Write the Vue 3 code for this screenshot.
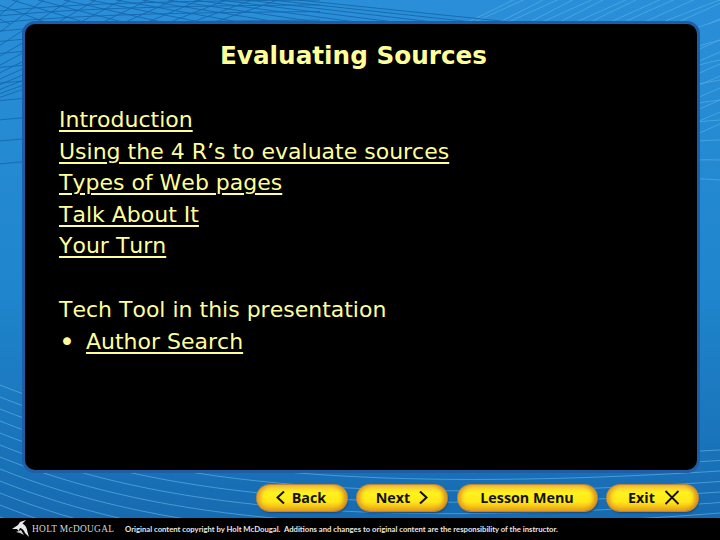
<script setup>
const topLines = []
for (let i = 0; i < 16; i++) {
  const y = 10 + i * 14
  topLines.push(`M${360 + i * 8} ${y + 60} C 480 ${y + 10}, 600 ${y - 50}, 720 ${y - 130 + i * 6}`)
}
for (let i = 0; i < 8; i++) {
  topLines.push(`M${470 + i * 34} 24 L${530 + i * 34} -3`)
}
const gridH = []
for (let i = 0; i < 12; i++) {
  const y = 3 + i * i * 0.9 + i * 4
  gridH.push(`M0 ${y + 8} C 80 ${y}, 180 ${y - 2}, 320 ${y - 3}`)
}
const gridV = []
for (let i = 0; i < 14; i++) {
  gridV.push(`M${-60 + i * 26} 0 L${-140 + i * 8} 110`)
  gridV.push(`M${i * 26 - 40} 0 L${i * 40 + 10} 24`)
}
const bottomLines = []
for (let i = 0; i < 17; i++) {
  const y = 385 + i * 12
  bottomLines.push(`M0 ${y} C 150 ${y + 60}, 350 ${y + 85}, 720 ${y + 65 - i * 1.5}`)
}
const rightLines = []
for (let i = 0; i < 8; i++) {
  rightLines.push(`M697 ${50 + i * 12} L720 ${40 + i * 12}`)
}
const copy = 'Original content copyright by Holt McDougal.\u00a0 Additions and changes to original content are the responsibility of the instructor.'
</script>

<template>
  <div class="slide">
    <svg class="bg" viewBox="0 0 720 540" width="720" height="540" aria-hidden="true">
      <defs>
        <linearGradient id="sky" x1="0" y1="0" x2="0" y2="1">
          <stop offset="0" stop-color="#2a8fd8" />
          <stop offset="0.55" stop-color="#1f85cc" />
          <stop offset="1" stop-color="#1668ae" />
        </linearGradient>
      </defs>
      <rect width="720" height="540" fill="url(#sky)" />
      <g fill="none" stroke="#5fb4ea" stroke-width="0.8" opacity="0.75">
        <path v-for="(d, i) in topLines" :key="'t' + i" :d="d" />
        <path v-for="(d, i) in rightLines" :key="'r' + i" :d="d" />
      </g>
      <g fill="none" stroke="#1668ac" stroke-width="0.9">
        <path v-for="(d, i) in gridH" :key="'h' + i" :d="d" />
        <path v-for="(d, i) in gridV" :key="'v' + i" :d="d" />
      </g>
      <g fill="none" stroke="#6cb8ec" stroke-width="0.8" opacity="0.75">
        <path v-for="(d, i) in bottomLines" :key="'b' + i" :d="d" />
      </g>
    </svg>

    <main class="panel">
      <h1 class="title">Evaluating Sources</h1>
      <ul class="links">
        <li><a>Introduction</a></li>
        <li><a>Using the 4 R’s to evaluate sources</a></li>
        <li><a>Types of Web pages</a></li>
        <li><a>Talk About It</a></li>
        <li><a>Your Turn</a></li>
      </ul>
      <p class="tool">Tech Tool in this presentation</p>
      <p class="bullet"><span class="dot">•</span><a>Author Search</a></p>
    </main>

    <nav class="nav">
      <div class="btn back">
        <svg width="11" height="15" viewBox="0 0 11 15"><path d="M9 1.5 L2.5 7.5 L9 13.5" fill="none" stroke="#15110a" stroke-width="2" /></svg>
        <span>Back</span>
      </div>
      <div class="btn next">
        <span>Next</span>
        <svg width="11" height="15" viewBox="0 0 11 15"><path d="M2 1.5 L8.5 7.5 L2 13.5" fill="none" stroke="#15110a" stroke-width="2" /></svg>
      </div>
      <div class="btn menu"><span>Lesson Menu</span></div>
      <div class="btn exit">
        <span>Exit</span>
        <svg width="16" height="15" viewBox="0 0 16 15"><path d="M1.5 1 L14.5 14 M14.5 1 L1.5 14" fill="none" stroke="#15110a" stroke-width="1.8" /></svg>
      </div>
    </nav>

    <footer class="footer">
      <svg class="logo" width="19" height="20" viewBox="0 0 19 20">
        <path d="M1 10 L7 6 L9 3 L15 1 L11.5 4.500 C14.5 6 16 9 16.5 13 L18 18 L14 14 C13 11 11 9.500 9 9 L7.500 12 L6 10 Z" fill="#e8e8e8" />
        <path d="M5 13 L10 11 L13 16 L9 14 Z" fill="#cfcfcf" />
      </svg>
      <span class="brand">HOLT McDOUGAL</span>
      <span class="copy">{{ copy }}</span>
    </footer>
  </div>
</template>

<style scoped>
.slide {
  position: relative;
  width: 720px;
  height: 540px;
  overflow: hidden;
  display: flex;
  flex-direction: column;
}
.bg {
  position: absolute;
  inset: 0;
}
.panel {
  position: relative;
  box-sizing: border-box;
  width: 678px;
  height: 452px;
  margin: 21px 0 0 22px;
  padding: 17px 0 0 34px;
  background: #000;
  border: 3px solid #1f5da6;
  border-radius: 13px;
  color: #ffff99;
  font-family: "DejaVu Sans", Verdana, sans-serif;
  font-size: 22px;
  font-kerning: none;
  line-height: 31.6px;
}
.title {
  margin: 0 0 34px -34px;
  padding-right: 15px;
  font-size: 24.7px;
  line-height: 29px;
  font-weight: 700;
  text-align: center;
}
.links {
  margin: 0 0 32px;
  padding: 0;
  list-style: none;
}
.links a,
.bullet a {
  text-decoration: underline;
  text-decoration-thickness: 2px;
  text-underline-offset: 3px;
}
.tool,
.bullet {
  margin: 0;
}
.bullet {
  display: flex;
}
.dot {
  width: 27px;
  font-size: 27px;
}
.nav {
  position: relative;
  display: flex;
  margin: 12px 0 0 257px;
}
.btn {
  box-sizing: border-box;
  height: 26px;
  padding-bottom: 1px;
  display: flex;
  align-items: center;
  justify-content: center;
  gap: 6px;
  border-radius: 13px;
  color: #15110a;
  font-family: "Open Sans", "Noto Sans", sans-serif;
  font-size: 14.3px;
  font-weight: 700;
  background: linear-gradient(180deg, #f6c23c 0, #fff21e 30%, #ffe818 65%, #eaa01c 100%);
  box-shadow:
    inset 5px 0 5px -2px #e8941c,
    inset -5px 0 5px -2px #d9851c,
    0 0 0 1px #b5893a,
    1px 2px 2px #144a80;
}
.back { width: 90px; margin-right: 10px; padding-right: 3px; }
.next { width: 90px; margin-right: 11px; gap: 8px; padding-left: 1px; }
.menu { width: 139px; margin-right: 10px; padding-right: 1px; }
.exit { width: 91px; gap: 9px; padding-left: 3px; }
.footer {
  position: relative;
  box-sizing: border-box;
  height: 22px;
  margin-top: 7px;
  padding-left: 11px;
  display: flex;
  align-items: center;
  background: #000;
  color: #e6e6e6;
}
.logo {
  flex: none;
  margin-right: 2px;
}
.brand {
  width: 93px;
  flex: none;
  font-family: "Liberation Serif", serif;
  font-size: 9.4px;
  font-weight: 400;
  letter-spacing: 0.3px;
  color: #d6d6d6;
}
.copy {
  font-family: "Lato", sans-serif;
  font-size: 7.7px;
  font-weight: 700;
  white-space: nowrap;
}
</style>
